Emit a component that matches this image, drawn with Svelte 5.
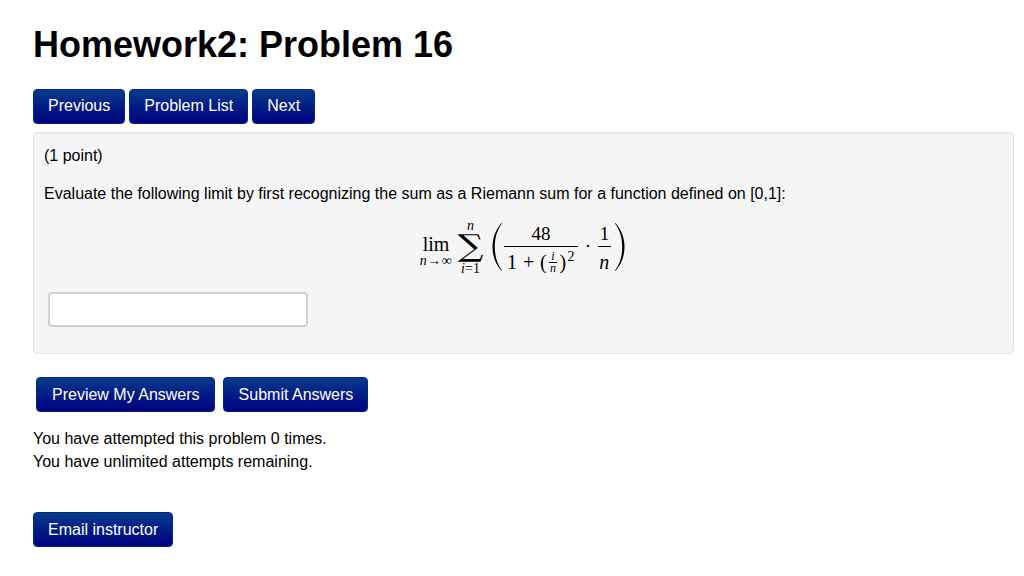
<script lang="ts">
	const navLinks = ['Previous', 'Problem List', 'Next'];
</script>

<main class="page">
	<h1>Homework2: Problem 16</h1>

	<nav class="nav">
		{#each navLinks as label (label)}
			<button class="btn" type="button">{label}</button>
		{/each}
	</nav>

	<section class="problem">
		<p class="points">(1 point)</p>
		<p class="prompt">Evaluate the following limit by first recognizing the sum as a Riemann sum for a function defined on [0,1]:</p>

		<div class="math">
			<div class="lim">
				<span class="lim-word">lim</span>
				<span class="lim-under"><i>n</i>→∞</span>
			</div>
			<div class="sum">
				<span class="sum-top"><i>n</i></span>
				<span class="sigma">∑</span>
				<span class="sum-bottom"><i>i</i>=1</span>
			</div>
			<svg class="paren left" viewBox="0 0 10 48" aria-hidden="true">
				<path d="M9.5 0 C3.5 7 0.5 15 0.5 24 C0.5 33 3.5 41 9.5 48 L10 47.5 C5 41 2.8 33 2.8 24 C2.8 15 5 7 10 0.5 Z" />
			</svg>
			<div class="frac first">
				<span class="num">48</span>
				<span class="den">1 + (<span class="mini"><i>i</i><i class="mini-den">n</i></span>)<sup>2</sup></span>
			</div>
			<span class="dot">·</span>
			<div class="frac second">
				<span class="num">1</span>
				<span class="den"><i>n</i></span>
			</div>
			<svg class="paren right" viewBox="0 0 10 48" aria-hidden="true">
				<path d="M0.5 0 C6.5 7 9.5 15 9.5 24 C9.5 33 6.5 41 0.5 48 L0 47.5 C5 41 7.2 33 7.2 24 C7.2 15 5 7 0 0.5 Z" />
			</svg>
		</div>

		<input class="answer" type="text" aria-label="Answer" />
	</section>

	<div class="actions">
		<button class="btn low" type="button">Preview My Answers</button>
		<button class="btn low" type="button">Submit Answers</button>
	</div>

	<p class="status">You have attempted this problem 0 times.<br />You have unlimited attempts remaining.</p>

	<button class="btn low email" type="button">Email instructor</button>
</main>

<style>
	:global(body) {
		background: #fff;
		color: #000;
		font-family: 'Liberation Sans', Arial, sans-serif;
	}

	.page {
		padding: 0 10px 0 33px;
		height: 576px;
		box-sizing: border-box;
		overflow: hidden;
		font-size: 16px;
	}

	h1 {
		margin: 0;
		padding-top: 24px;
		font-size: 36px;
		line-height: 42px;
		font-weight: 700;
	}

	.nav {
		display: flex;
		gap: 4px;
		margin-top: 23px;
	}

	.btn {
		display: block;
		height: 35px;
		padding: 0 14px 1px;
		border: 1px solid #002a7c;
		border-radius: 4px;
		background: linear-gradient(to bottom, #063a8c, #000080);
		color: #fff;
		font-family: inherit;
		font-size: 16px;
		line-height: 32px;
		white-space: nowrap;
	}

	.low {
		padding-bottom: 0;
		line-height: 33px;
	}

	.problem {
		margin-top: 8px;
		height: 222px;
		box-sizing: border-box;
		padding: 15px 10px 0;
		background: #f5f5f5;
		border: 1px solid #e3e3e3;
		border-radius: 4px;
		box-shadow: inset 0 1px 1px rgba(0, 0, 0, 0.05);
	}

	.points,
	.prompt {
		margin: 0;
		line-height: 16px;
	}

	.prompt {
		margin-top: 22px;
	}

	.math {
		display: flex;
		justify-content: center;
		align-items: flex-start;
		height: 56px;
		margin-top: 19px;
		padding-right: 3px;
		font-family: 'Liberation Serif', 'Times New Roman', serif;
		font-size: 19px;
		color: #000;
	}

	.lim {
		display: flex;
		flex-direction: column;
		align-items: center;
		width: 34px;
		margin-top: 13px;
	}

	.lim-word {
		font-size: 20px;
		line-height: 21px;
	}

	.lim-under {
		font-size: 14px;
		line-height: 11px;
		letter-spacing: 0.5px;
		white-space: nowrap;
	}

	.sum {
		display: flex;
		flex-direction: column;
		align-items: center;
		margin-left: 5px;
		width: 25px;
	}

	.sum-top,
	.sum-bottom {
		font-size: 14px;
		line-height: 10px;
		white-space: nowrap;
	}

	.sigma {
		font-family: 'DejaVu Serif', serif;
		font-size: 30px;
		line-height: 33px;
		height: 33px;
		transform: translateY(-2px) scaleX(1.2);
	}

	.paren {
		width: 10px;
		height: 48px;
		flex: none;
		margin-top: 2px;
		fill: #000;
	}

	.left {
		margin-left: 9px;
		margin-right: 2px;
	}

	.right {
		margin-left: 4px;
	}

	.frac {
		display: flex;
		flex-direction: column;
		align-items: center;
	}

	.first {
		width: 74px;
	}

	.second {
		width: 13px;
	}

	.num {
		display: block;
		width: 100%;
		height: 25px;
		text-align: center;
		line-height: 25px;
		border-bottom: 1px solid #000;
	}

	.den {
		display: flex;
		align-items: center;
		justify-content: center;
		white-space: pre;
		height: 30px;
		font-size: 20px;
		letter-spacing: 0.4px;
	}

	.den sup {
		font-size: 14px;
		line-height: 1;
		align-self: flex-start;
		margin-top: 3px;
		margin-left: 1px;
	}

	.mini {
		display: inline-flex;
		flex-direction: column;
		align-items: center;
		font-size: 12px;
		line-height: 11px;
		padding: 0 2px;
	}

	.mini-den {
		border-top: 1px solid #000;
		padding: 0 1px;
	}

	.dot {
		width: 20px;
		line-height: 50px;
		text-align: center;
	}

	.answer {
		display: block;
		margin: 15px 0 0 4px;
		width: 260px;
		height: 35px;
		box-sizing: border-box;
		background: #fff;
		border: 2px solid #d0d0d0;
		border-radius: 4px;
		outline: none;
	}

	.actions {
		display: flex;
		gap: 8px;
		margin: 23px 0 0 3px;
	}

	.actions .btn {
		padding-left: 15px;
	}

	.status {
		margin: 15px 0 0;
		line-height: 23px;
	}

	.email {
		margin-top: 39px;
	}
</style>
